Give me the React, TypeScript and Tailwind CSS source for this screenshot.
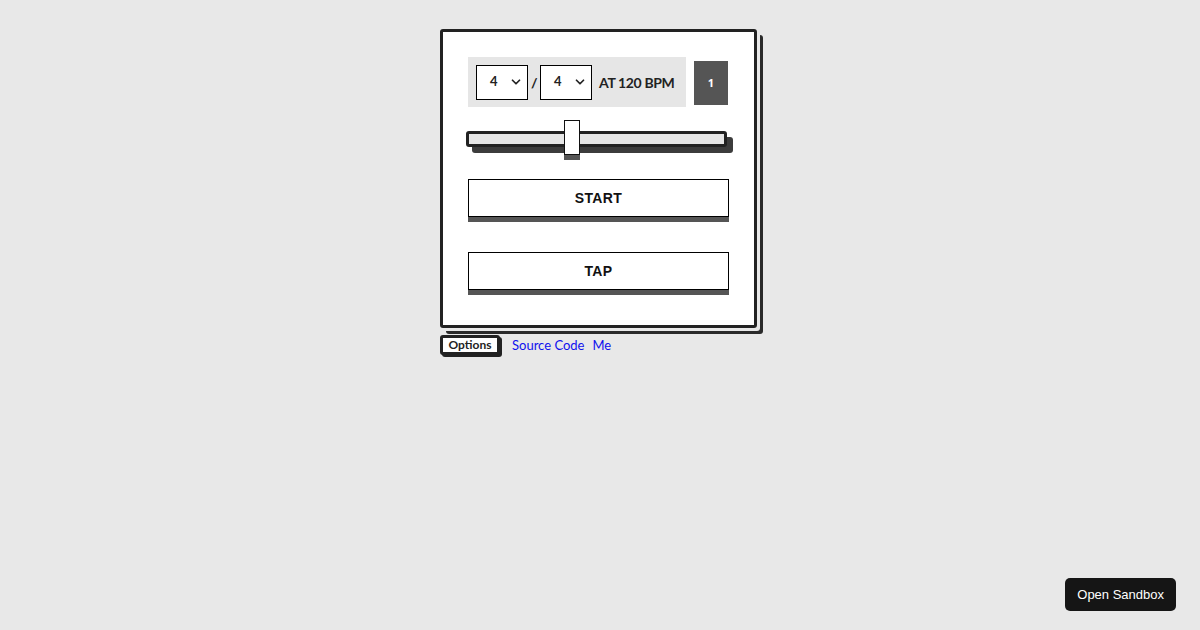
import React from "react";
import { ChevronDown } from "lucide-react";

const hand = { fontFamily: '"Lato", "DejaVu Sans", sans-serif' };

function Select({ value }: { value: string }) {
  return (
    <div className="flex h-[35px] w-[52px] shrink-0 items-center justify-between border border-black bg-white pl-[13px] pr-[4px]">
      <span className="text-[13px] font-bold text-[#222]">{value}</span>
      <ChevronDown size={14} strokeWidth={3} className="text-[#222]" />
    </div>
  );
}

function BigButton({ label }: { label: string }) {
  return (
    <button
      className="flex h-[38px] w-[261px] items-center justify-center border border-black bg-white text-[14px] font-bold tracking-wide text-[#111] shadow-[0_5px_0_#555]"
      style={{ fontFamily: '"Liberation Sans", Arial, sans-serif' }}
    >
      {label}
    </button>
  );
}

export default function App() {
  return (
    <div className="relative min-h-[630px] w-full bg-[#e8e8e8]">
      <div className="flex justify-center pt-[29px]">
        <div className="w-[320px]">
          <div className="w-[317px] rounded-[3px] border-[3px] border-[#222] bg-white px-[25px] pt-[25px] pb-[35px] shadow-[3px_3px_0_#e8e8e8,6px_6px_0_#2a2a2a]">
            <div className="flex items-start gap-2">
              <div className="flex h-[50px] w-[218px] shrink-0 items-center bg-[#e6e6e6] px-[8px]" style={hand}>
                <Select value="4" />
                <span className="mx-[3px] w-[6px] text-center text-[14px] font-bold text-[#222]">/</span>
                <Select value="4" />
                <span className="ml-[7px] whitespace-nowrap text-[14px] font-bold tracking-tight text-[#222]">
                  AT 120 BPM
                </span>
              </div>
              <div className="mt-[4px] flex h-[44px] w-[34px] shrink-0 items-center justify-center bg-[#555] text-[11px] font-bold text-white">
                1
              </div>
            </div>

            <div className="relative mt-[13px] h-[35px]">
              <div className="absolute left-[-2px] top-[11px] h-[16px] w-[261px] rounded-[3px] border-[3px] border-[#222] bg-[#e6e6e6] shadow-[6px_6px_0_#3c3c3c]" />
              <div className="absolute left-[96px] top-0 h-[35px] w-[16px] border border-[#111] bg-white shadow-[0_5px_0_#555]" />
            </div>

            <div className="mt-[24px] flex flex-col gap-[35px]">
              <BigButton label="START" />
              <BigButton label="TAP" />
            </div>
          </div>

          <div className="mt-[6px] flex items-center" style={hand}>
            <div className="flex h-[20px] w-[60px] items-center justify-center rounded-[3px] border-[3px] border-[#222] bg-white text-[12px] font-bold text-[#222] shadow-[2px_2px_0_#222]">
              Options
            </div>
            <a className="ml-[12px] mt-[2px] text-[13px] text-[#1010ee]" href="#">
              Source Code
            </a>
            <a className="ml-[8px] mt-[2px] text-[13px] text-[#1010ee]" href="#">
              Me
            </a>
          </div>
        </div>
      </div>

      <div className="absolute bottom-[19px] right-[24px]">
        <button
          className="h-[33px] rounded-[5px] bg-[#151515] px-[12px] text-[13px] text-white"
          style={{ fontFamily: '"Liberation Sans", Arial, sans-serif' }}
        >
          Open Sandbox
        </button>
      </div>
    </div>
  );
}
